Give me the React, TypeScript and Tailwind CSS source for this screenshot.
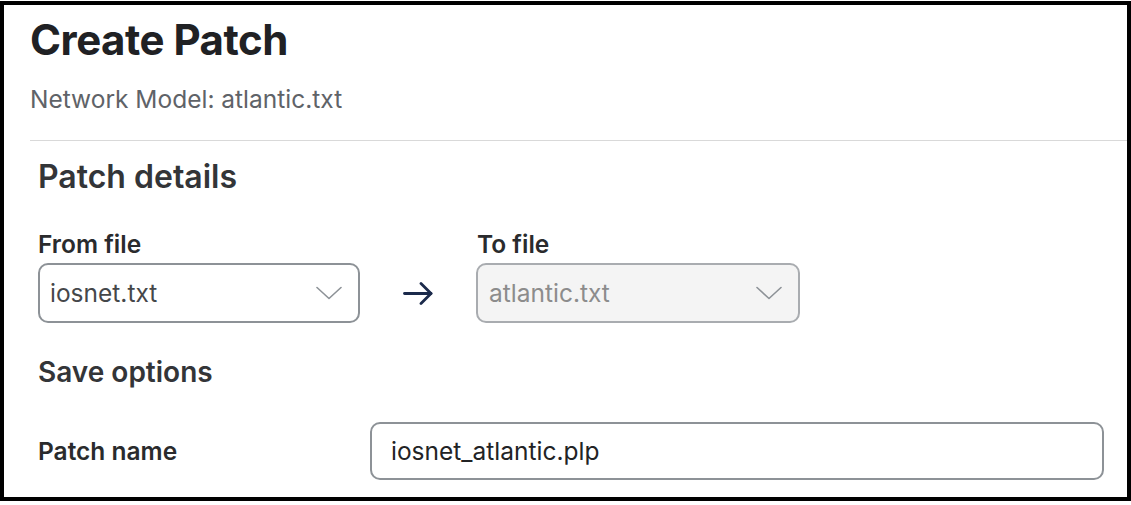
import React from "react";

function Chevron() {
  return (
    <svg width="26" height="14" viewBox="0 0 26 14" fill="none" className="shrink-0">
      <path d="M1 1.5 L13 12.5 L25 1.5" stroke="#8d9297" strokeWidth="1.6" strokeLinecap="round" strokeLinejoin="round" />
    </svg>
  );
}

function Arrow() {
  return (
    <svg width="30" height="23" viewBox="0 0 30 23" fill="none">
      <path d="M1.5 11.5 H28" stroke="#1b2a4b" strokeWidth="2.8" strokeLinecap="round" />
      <path d="M18 1.5 L28 11.5 L18 21.5" stroke="#1b2a4b" strokeWidth="2.8" strokeLinecap="round" strokeLinejoin="round" />
    </svg>
  );
}

export default function App() {
  return (
    <div
      className="mt-[1px] box-border h-[500px] w-[1131px] overflow-hidden border-[4px] border-black bg-white pt-[11px] pl-[26px]"
      style={{ fontFamily: "Inter, 'Noto Sans', sans-serif" }}
    >
      <h1 className="m-0 text-[42px] font-bold leading-[48px] tracking-[-0.5px] text-[#202124]">Create Patch</h1>
      <p className="mt-[20px] text-[24.5px] leading-[30px] text-[#5f6368]">Network Model: atlantic.txt</p>
      <div className="mt-[26px] h-px bg-[#d9d9d9]" />
      <div className="pl-[8px] pr-[23px]">
        <h2 className="mt-[18px] text-[32px] font-semibold leading-[36px] text-[#333538]">Patch details</h2>
        <div className="mt-[35px] flex items-end">
          <div className="flex w-[322px] flex-col">
            <label className="text-[24.5px] font-semibold leading-[28px] text-[#2a2b2d]">From file</label>
            <div className="mt-[5px] flex h-[60px] items-center justify-between rounded-[10px] border-2 border-[#8d9297] bg-white pl-[10px] pr-[16px]">
              <span className="text-[24.5px] text-[#45474a]">iosnet.txt</span>
              <Chevron />
            </div>
          </div>
          <div className="flex h-[60px] w-[116px] items-center justify-center">
            <Arrow />
          </div>
          <div className="flex w-[324px] flex-col">
            <label className="pl-[1px] text-[24.5px] font-semibold leading-[28px] text-[#2a2b2d]">To file</label>
            <div className="mt-[5px] flex h-[60px] items-center justify-between rounded-[10px] border-2 border-[#a9acb0] bg-[#f4f4f4] pl-[11px] pr-[16px]">
              <span className="text-[24.5px] text-[#8c8c8c]">atlantic.txt</span>
              <Chevron />
            </div>
          </div>
        </div>
        <h2 className="mt-[33px] text-[28px] font-semibold leading-[32px] text-[#333538]">Save options</h2>
        <div className="mt-[34px] flex items-center">
          <label className="w-[332px] text-[24.5px] font-semibold leading-[28px] text-[#2a2b2d]">Patch name</label>
          <div className="flex h-[58px] flex-1 items-center rounded-[10px] border-2 border-[#8d9297] bg-white pl-[19px]">
            <span className="text-[24.5px] text-[#222325]">iosnet_atlantic.plp</span>
          </div>
        </div>
      </div>
    </div>
  );
}
